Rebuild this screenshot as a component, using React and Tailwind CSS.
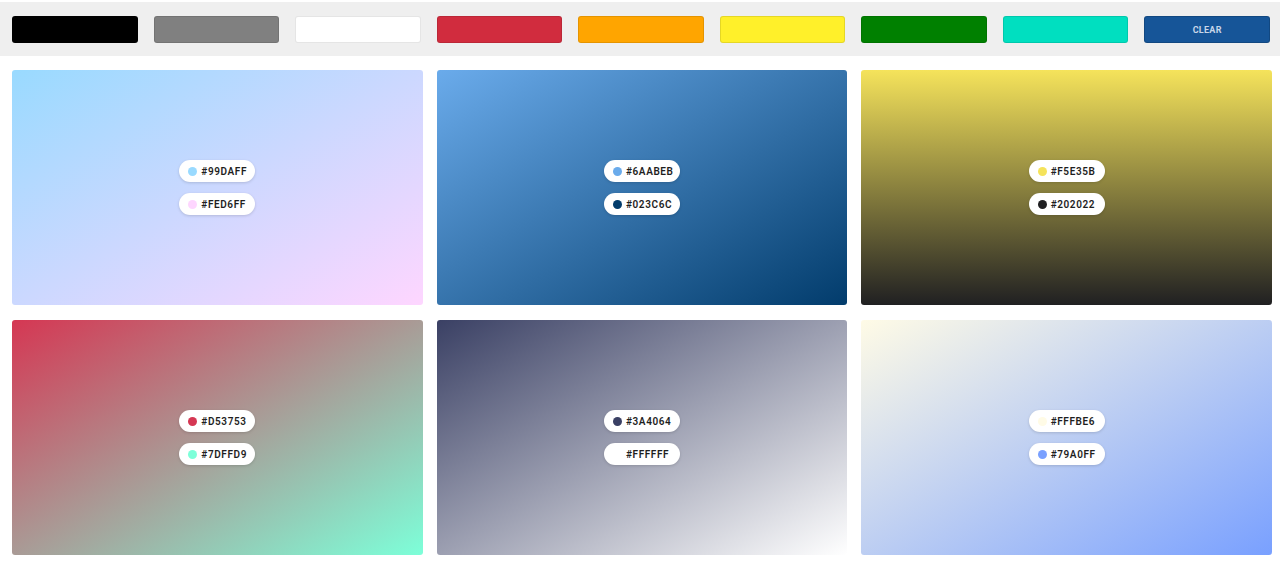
import React from 'react';

const SWATCHES = ['bg-[#000000]', 'bg-[#808080]', 'bg-[#ffffff]', 'bg-[#d12c3e]', 'bg-[#ffa500]', 'bg-[#fff02a]', 'bg-[#008000]', 'bg-[#00dfc0]'];

const GRADIENTS = [
  { cls: 'bg-[linear-gradient(150deg,#99DAFF,#FED6FF)]', colors: ['#99DAFF', '#FED6FF'], dots: ['bg-[#99DAFF]', 'bg-[#FED6FF]'] },
  { cls: 'bg-[linear-gradient(150deg,#6AABEB,#023C6C)]', colors: ['#6AABEB', '#023C6C'], dots: ['bg-[#6AABEB]', 'bg-[#023C6C]'] },
  { cls: 'bg-[linear-gradient(180deg,#F5E35B,#202022)]', colors: ['#F5E35B', '#202022'], dots: ['bg-[#F5E35B]', 'bg-[#202022]'] },
  { cls: 'bg-[linear-gradient(150deg,#D53753,#7DFFD9)]', colors: ['#D53753', '#7DFFD9'], dots: ['bg-[#D53753]', 'bg-[#7DFFD9]'] },
  { cls: 'bg-[linear-gradient(150deg,#3A4064,#FFFFFF)]', colors: ['#3A4064', '#FFFFFF'], dots: ['bg-[#3A4064]', 'bg-[#FFFFFF]'] },
  { cls: 'bg-[linear-gradient(150deg,#FFFBE6,#79A0FF)]', colors: ['#FFFBE6', '#79A0FF'], dots: ['bg-[#FFFBE6]', 'bg-[#79A0FF]'] },
];

const Pill = ({ dot, label }) => (
  <div className="flex items-center gap-[4px] h-[22px] w-[76px] pl-[9px] rounded-full bg-white shadow-[0_1px_3px_rgba(0,0,0,0.15)]">
    <span className={`w-[9px] h-[9px] rounded-full ${dot}`} />
    <span className="text-[10px] font-semibold tracking-[0.6px] text-[#1e1e1e]">{label}</span>
  </div>
);

const App = () => {
  return (
    <div className="min-h-screen bg-white pt-[2px] font-['Roboto',sans-serif]">
      <div className="bg-[#efefef] h-[54px] pl-3 pr-[10px] pt-[14px] grid grid-cols-9 gap-x-4">
        {SWATCHES.map((c, i) => (
          <button key={i} className={`h-[27px] rounded-[3px] border border-black/10 ${c}`} />
        ))}
        <button className="h-[27px] pt-[2px] rounded-[3px] border border-black/15 bg-[#165598] text-[#c8d6e8] text-[9px] font-bold tracking-[0.3px]">CLEAR</button>
      </div>
      <div className="grid grid-cols-3 gap-x-[14px] gap-y-[15px] pl-3 pr-[8px] pt-[14px] pb-4">
        {GRADIENTS.map((g, i) => (
          <div key={i} className={`h-[235px] rounded-[3px] flex flex-col items-center justify-center gap-[11px] ${g.cls}`}>
            <Pill dot={g.dots[0]} label={g.colors[0]} />
            <Pill dot={g.dots[1]} label={g.colors[1]} />
          </div>
        ))}
      </div>
    </div>
  );
};

export default App;
